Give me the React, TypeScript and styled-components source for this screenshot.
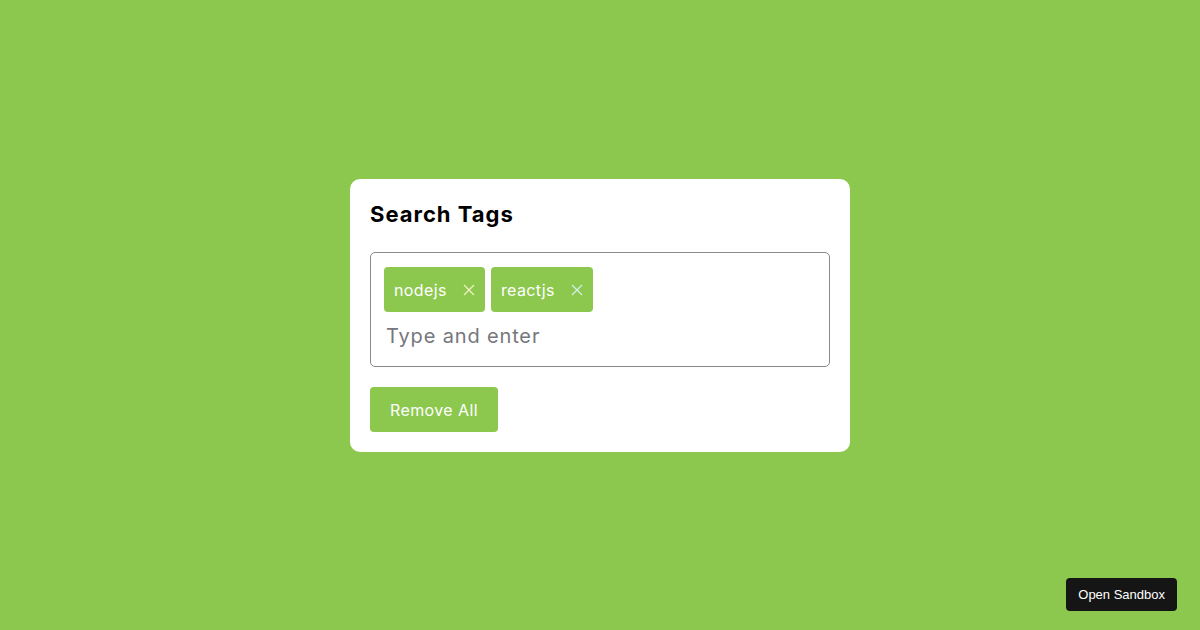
import React, { useState } from 'react';
import styled, { createGlobalStyle } from 'styled-components';

const GlobalStyle = createGlobalStyle`
  html, body {
    margin: 0;
    padding: 0;
    background: #8cc84d;
  }
  body {
    font-family: Inter, "Noto Sans", sans-serif;
  }
`;

const Page = styled.div`
  width: 1200px;
  height: 630px;
  display: flex;
  align-items: center;
  justify-content: center;
  position: relative;
`;

const Card = styled.div`
  width: 500px;
  box-sizing: border-box;
  background: #fff;
  border-radius: 10px;
  padding: 20px;
  margin-top: 1px;
`;

const Title = styled.h2`
  margin: 0 0 23px;
  font-size: 22px;
  line-height: 30px;
  font-weight: 700;
  color: #000;
  letter-spacing: 1px;
`;

const TagBox = styled.div`
  display: flex;
  flex-wrap: wrap;
  gap: 6px;
  border: 1px solid #8a8a8a;
  border-radius: 5px;
  padding: 14px 13px 13px;
`;

const Tag = styled.span`
  display: inline-flex;
  align-items: center;
  height: 45px;
  box-sizing: border-box;
  padding: 0 10px;
  background: #8cc84d;
  border-radius: 4px;
  color: #fff;
  font-size: 16px;
  letter-spacing: 0.4px;
`;

const CloseBtn = styled.button<{ $tint: string }>`
  display: inline-flex;
  align-items: center;
  justify-content: center;
  border: none;
  background: none;
  padding: 0;
  margin-left: 16px;
  cursor: pointer;
  color: ${(p) => p.$tint};
`;

const TagInput = styled.input`
  flex: 1 1 100%;
  border: none;
  outline: none;
  font-family: inherit;
  font-size: 20px;
  letter-spacing: 0.85px;
  padding: 6px 2px 5px;
  color: #333;
  &::placeholder {
    color: #75777c;
  }
`;

const RemoveButton = styled.button`
  margin-top: 20px;
  height: 45px;
  padding: 0 20px;
  border: none;
  border-radius: 4px;
  background: #8cc84d;
  color: #fff;
  font-family: inherit;
  font-size: 16px;
  letter-spacing: 0.4px;
  cursor: pointer;
`;

const SandboxButton = styled.button`
  position: absolute;
  right: 23px;
  bottom: 19px;
  height: 33px;
  padding: 0 12px;
  border: none;
  border-radius: 4px;
  background: #151515;
  color: #fff;
  font-family: "Liberation Sans", Arial, sans-serif;
  font-size: 13px;
`;

const tints = ['#f3f0c4', '#d4f0ee'];

const App: React.FC = () => {
  const [tags, setTags] = useState<string[]>(['nodejs', 'reactjs']);
  const [value, setValue] = useState('');

  const onKeyDown = (e: React.KeyboardEvent<HTMLInputElement>) => {
    if (e.key === 'Enter' && value.trim()) {
      setTags([...tags, value.trim()]);
      setValue('');
    }
  };

  return (
    <>
      <GlobalStyle />
      <Page>
        <Card>
          <Title>Search Tags</Title>
          <TagBox>
            {tags.map((tag, i) => (
              <Tag key={tag}>
                {tag}
                <CloseBtn $tint={tints[i % 2]} onClick={() => setTags(tags.filter((t) => t !== tag))}>
                  <svg width="12" height="12" viewBox="0 0 12 12" fill="none" stroke="currentColor" strokeWidth="1.2">
                    <path d="M1 1L11 11M11 1L1 11" />
                  </svg>
                </CloseBtn>
              </Tag>
            ))}
            <TagInput
              value={value}
              onChange={(e) => setValue(e.target.value)}
              onKeyDown={onKeyDown}
              placeholder="Type and enter"
            />
          </TagBox>
          <RemoveButton onClick={() => setTags([])}>Remove All</RemoveButton>
        </Card>
        <SandboxButton>Open Sandbox</SandboxButton>
      </Page>
    </>
  );
};

export default App;
